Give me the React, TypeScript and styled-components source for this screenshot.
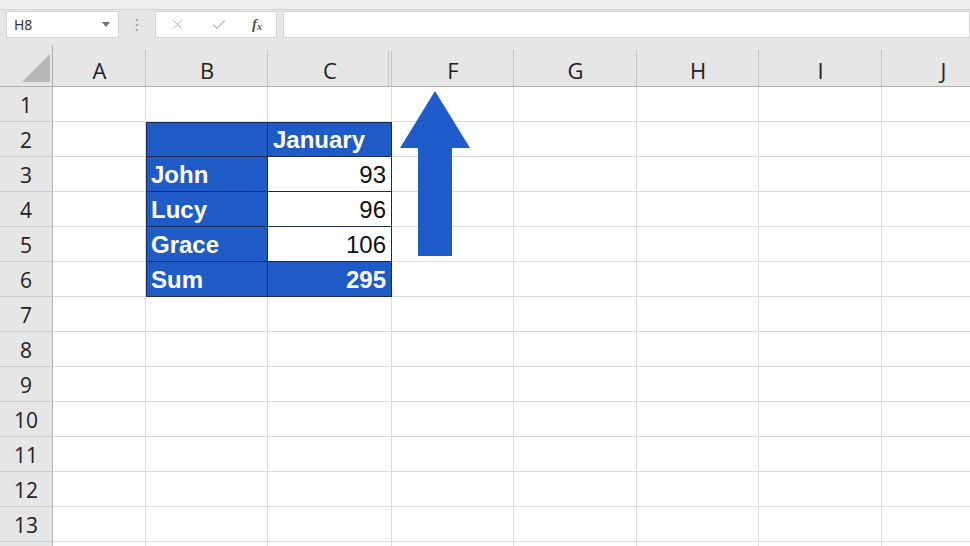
import React from 'react';
import styled, { createGlobalStyle, css } from 'styled-components';
import { X, Check } from 'lucide-react';

const GlobalStyle = createGlobalStyle`
  html, body {
    margin: 0;
    padding: 0;
    background: #ffffff;
    overflow: hidden;
  }
`;

const BLUE = '#1f5bc6';
const TABLE_LINE = '#1b2a52';
const GRID_LINE = '#dcdcdc';
const HEADER_BG = '#e6e6e6';

const Page = styled.div`
  position: relative;
  width: 970px;
  height: 546px;
  overflow: hidden;
  background: #ffffff;
  font-family: 'Open Sans', 'Noto Sans', sans-serif;
`;

const TopStrip = styled.div`
  height: 9px;
  background: #eeeeee;
  border-bottom: 1px solid #d4d4d4;
`;

const FormulaBar = styled.div`
  display: flex;
  align-items: flex-start;
  height: 35px;
  padding: 1px 0 0 6px;
  box-sizing: border-box;
  background: ${HEADER_BG};
`;

const Box = styled.div<{ width?: number }>`
  display: flex;
  align-items: center;
  box-sizing: border-box;
  height: 27px;
  background: #ffffff;
  border: 1px solid #d3d3d3;
  ${(p) => (p.width ? `width: ${p.width}px;` : 'flex: 1;')}
`;

const NameBox = styled(Box)`
  justify-content: space-between;
  padding: 0 8px 0 7px;
  font-family: 'Noto Sans', 'Open Sans', sans-serif;
  font-size: 14px;
  color: #333333;
`;

const DropTriangle = styled.span`
  width: 0;
  height: 0;
  border-left: 4px solid transparent;
  border-right: 4px solid transparent;
  border-top: 5px solid #707070;
`;

const Grip = styled.div`
  display: flex;
  align-items: center;
  justify-content: center;
  width: 36px;
  height: 27px;
`;

const FxBox = styled(Box)`
  justify-content: space-between;
  padding: 0 14px 0 14px;
  margin-right: 6px;
  color: #b8b8b8;
`;

const FxLabel = styled.span`
  font-family: 'Liberation Serif', serif;
  font-style: italic;
  font-size: 15px;
  font-weight: bold;
  color: #555555;
  sub {
    font-size: 10px;
    vertical-align: -1px;
  }
`;

const Sheet = styled.div`
  display: grid;
  grid-template-columns: 53px 93px 122px 124px 122px 123px 122px 123px 123px;
  grid-template-rows: 42px;
  grid-auto-rows: 35px;
`;

const Corner = styled.div`
  box-sizing: border-box;
  background: ${HEADER_BG};
  border-right: 1px solid #b0b0b0;
  border-bottom: 1px solid #b0b0b0;
  display: flex;
  align-items: flex-end;
  justify-content: flex-end;
  padding: 0 2px 4px 0;
`;

const ColHeader = styled.div<{ hiddenAfter?: boolean }>`
  box-sizing: border-box;
  display: flex;
  align-items: center;
  justify-content: center;
  padding-top: 8px;
  font-size: 22px;
  color: #222222;
  border-bottom: 1px solid #b0b0b0;
  background: ${(p) =>
    p.hiddenAfter
      ? `linear-gradient(#c4c4c4, #c4c4c4) right 3px bottom 0 / 1px 36px no-repeat,
         linear-gradient(#c4c4c4, #c4c4c4) right 0 bottom 0 / 1px 36px no-repeat, ${HEADER_BG}`
      : `linear-gradient(#c4c4c4, #c4c4c4) right 0 bottom 0 / 1px 36px no-repeat, ${HEADER_BG}`};
`;

const RowHeader = styled.div`
  box-sizing: border-box;
  display: flex;
  align-items: center;
  justify-content: center;
  padding-top: 1px;
  font-size: 21px;
  color: #222222;
  background: ${HEADER_BG};
  border-right: 1px solid #b0b0b0;
  border-bottom: 1px solid #cdcdcd;
`;

type Tone = 'plain' | 'blue' | 'white';

const Cell = styled.div<{ tone: Tone; align?: 'left' | 'right'; edgeTop?: boolean; edgeLeft?: boolean }>`
  box-sizing: border-box;
  display: flex;
  align-items: center;
  justify-content: ${(p) => (p.align === 'right' ? 'flex-end' : 'flex-start')};
  padding: 1px 5px 0 5px;
  font-family: 'Liberation Sans', Arial, sans-serif;
  font-size: 24px;
  border-right: 1px solid ${GRID_LINE};
  border-bottom: 1px solid ${GRID_LINE};
  ${(p) =>
    p.tone !== 'plain' &&
    css`
      border-right-color: ${TABLE_LINE};
      border-bottom-color: ${TABLE_LINE};
      box-shadow: ${[
        p.edgeTop ? `inset 0 1px 0 ${TABLE_LINE}` : '',
        p.edgeLeft ? `inset 1px 0 0 ${TABLE_LINE}` : '',
      ]
        .filter(Boolean)
        .join(', ') || 'none'};
    `}
  ${(p) =>
    p.tone === 'blue' &&
    css`
      background: ${BLUE};
      color: #ffffff;
      font-weight: bold;
    `}
  ${(p) =>
    p.tone === 'white' &&
    css`
      background: #ffffff;
      color: #111111;
    `}
`;

const Arrow = styled.svg`
  position: absolute;
  left: 400px;
  top: 90px;
`;

const columns = ['A', 'B', 'C', 'F', 'G', 'H', 'I', 'J'];

type CellData = { text?: string; tone: Tone; align?: 'left' | 'right' };

const table: Record<number, [CellData, CellData]> = {
  2: [{ tone: 'blue' }, { text: 'January', tone: 'blue' }],
  3: [{ text: 'John', tone: 'blue' }, { text: '93', tone: 'white', align: 'right' }],
  4: [{ text: 'Lucy', tone: 'blue' }, { text: '96', tone: 'white', align: 'right' }],
  5: [{ text: 'Grace', tone: 'blue' }, { text: '106', tone: 'white', align: 'right' }],
  6: [{ text: 'Sum', tone: 'blue' }, { text: '295', tone: 'blue', align: 'right' }],
};

// the 14th row only peeks in at the bottom edge, so its number is left out
const rows = Array.from({ length: 14 }, (_, i) => i + 1);

export default function App() {
  return (
    <>
      <GlobalStyle />
      <Page>
        <TopStrip />
        <FormulaBar>
          <NameBox width={113}>
            <span>H8</span>
            <DropTriangle />
          </NameBox>
          <Grip>
            <svg width="4" height="14" viewBox="0 0 4 14">
              <circle cx="2" cy="2" r="1.2" fill="#a8a8a8" />
              <circle cx="2" cy="7" r="1.2" fill="#a8a8a8" />
              <circle cx="2" cy="12" r="1.2" fill="#a8a8a8" />
            </svg>
          </Grip>
          <FxBox width={122}>
            <X size={15} strokeWidth={1.6} />
            <Check size={16} strokeWidth={1.8} />
            <FxLabel>
              f<sub>x</sub>
            </FxLabel>
          </FxBox>
          <Box />
        </FormulaBar>
        <Sheet>
          <Corner>
            <svg width="28" height="28" viewBox="0 0 28 28">
              <polygon points="0,28 28,28 28,0" fill="#b9b9b9" />
            </svg>
          </Corner>
          {columns.map((c) => (
            <ColHeader key={c} hiddenAfter={c === 'C'}>
              {c}
            </ColHeader>
          ))}
          {rows.map((r) => (
            <React.Fragment key={r}>
              <RowHeader>{r < 14 ? r : ''}</RowHeader>
              {columns.map((c) => {
                const data = table[r];
                if (data && (c === 'B' || c === 'C')) {
                  const d = c === 'B' ? data[0] : data[1];
                  return (
                    <Cell
                      key={c}
                      tone={d.tone}
                      align={d.align}
                      edgeTop={r === 2}
                      edgeLeft={c === 'B'}
                    >
                      {d.text}
                    </Cell>
                  );
                }
                return <Cell key={c} tone="plain" />;
              })}
            </React.Fragment>
          ))}
        </Sheet>
        <Arrow width="70" height="167" viewBox="0 0 70 167">
          <path d="M35 1 L70 58 L52 58 L52 166 L18 166 L18 58 L0 58 Z" fill="#1e5ccb" />
        </Arrow>
      </Page>
    </>
  );
}
